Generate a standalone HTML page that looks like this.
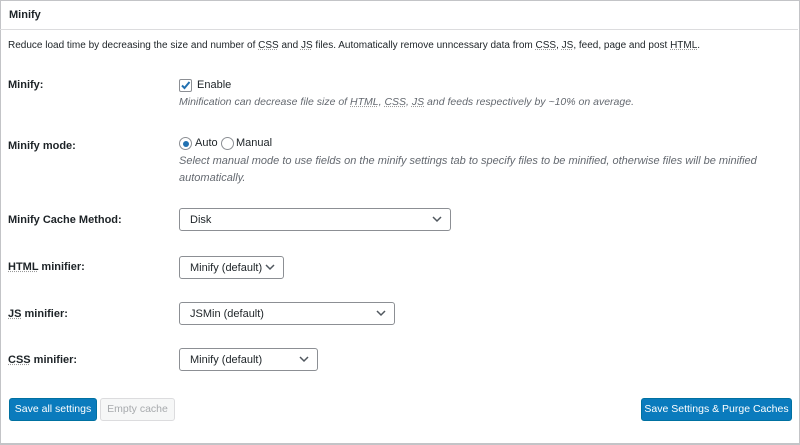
<!DOCTYPE html>
<html><head><style>
*{box-sizing:border-box;margin:0;padding:0}
body{width:800px;height:445px;background:#fff;font-family:"Liberation Sans",sans-serif;font-size:11px;color:#1d2327;position:relative;overflow:hidden}
.box{position:absolute;left:0;top:0;width:800px;height:445px;border:1px solid #c3c4c7;border-bottom:2px solid #c3c4c7}
.hd{position:absolute;left:0;top:0;width:798px;height:30px;border-bottom:1px solid #dcdcde}
.a{position:absolute;white-space:nowrap}
.b{font-weight:bold}
.i{font-style:italic;color:#646970}
abbr{text-decoration:underline dotted #999}
.sel{position:absolute;height:23px;border:1px solid #8c8f94;border-radius:3px;padding:5px 0 0 10px;font-size:11px}
.sel svg{position:absolute;right:8px;top:7px}
.btn{position:absolute;top:398px;height:23px;border-radius:3px;font-size:10.5px;text-align:center;line-height:21px}
.p{background:#0a7bbd;color:#fff;border:1px solid #0071a1}
</style></head><body>
<div class="box"></div>
<div class="hd"></div>
<div class="a b" style="left:9px;top:9px">Minify</div>
<div class="a" style="left:8px;top:40px;font-size:10px">Reduce load time by decreasing the size and number of <abbr>CSS</abbr> and <abbr>JS</abbr> files. Automatically remove unncessary data from <abbr>CSS</abbr>, <abbr>JS</abbr>, feed, page and post <abbr>HTML</abbr>.</div>

<div class="a b" style="left:8px;top:79px">Minify:</div>
<div class="a" style="left:179px;top:79px;width:13px;height:13px;border:1px solid #8c8f94;border-radius:2px"><svg width="11" height="11" style="position:absolute;left:0;top:0"><path d="M2 5.5L4.5 8L9.5 2" stroke="#2271b1" stroke-width="2" fill="none"/></svg></div>
<div class="a" style="left:197px;top:79px">Enable</div>
<div class="a i" style="left:179px;top:96px;font-size:10.5px">Minification can decrease file size of <abbr>HTML</abbr>, <abbr>CSS</abbr>, <abbr>JS</abbr> and feeds respectively by ~10% on average.</div>

<div class="a b" style="left:8px;top:140px">Minify mode:</div>
<div class="a" style="left:179px;top:137px;width:13px;height:13px;border:1px solid #8c8f94;border-radius:50%"><div style="position:absolute;left:2.5px;top:2.5px;width:6px;height:6px;border-radius:50%;background:#2271b1"></div></div>
<div class="a" style="left:195px;top:137px">Auto</div>
<div class="a" style="left:221px;top:137px;width:13px;height:13px;border:1px solid #8c8f94;border-radius:50%"></div>
<div class="a" style="left:236px;top:137px">Manual</div>
<div class="a i" style="left:179px;top:155px">Select manual mode to use fields on the minify settings tab to specify files to be minified, otherwise files will be minified</div>
<div class="a i" style="left:179px;top:172px">automatically.</div>

<div class="a b" style="left:8px;top:214px">Minify Cache Method:</div>
<div class="sel" style="left:179px;top:208px;width:272px">Disk<svg width="10" height="7"><path d="M1 1L5 5L9 1" stroke="#50575e" stroke-width="1.5" fill="none"/></svg></div>

<div class="a b" style="left:8px;top:261px"><abbr>HTML</abbr> minifier:</div>
<div class="sel" style="left:179px;top:256px;width:105px">Minify (default)<svg width="10" height="7"><path d="M1 1L5 5L9 1" stroke="#50575e" stroke-width="1.5" fill="none"/></svg></div>

<div class="a b" style="left:8px;top:308px"><abbr>JS</abbr> minifier:</div>
<div class="sel" style="left:179px;top:302px;width:216px">JSMin (default)<svg width="10" height="7"><path d="M1 1L5 5L9 1" stroke="#50575e" stroke-width="1.5" fill="none"/></svg></div>

<div class="a b" style="left:8px;top:354px"><abbr>CSS</abbr> minifier:</div>
<div class="sel" style="left:179px;top:348px;width:139px">Minify (default)<svg width="10" height="7"><path d="M1 1L5 5L9 1" stroke="#50575e" stroke-width="1.5" fill="none"/></svg></div>

<div class="btn p" style="left:9px;width:88px">Save all settings</div>
<div class="btn" style="left:100px;width:75px;border:1px solid #dcdcde;background:#f6f7f7;color:#a7aaad">Empty cache</div>
<div class="btn p" style="left:641px;width:151px">Save Settings &amp; Purge Caches</div>
</body></html>
